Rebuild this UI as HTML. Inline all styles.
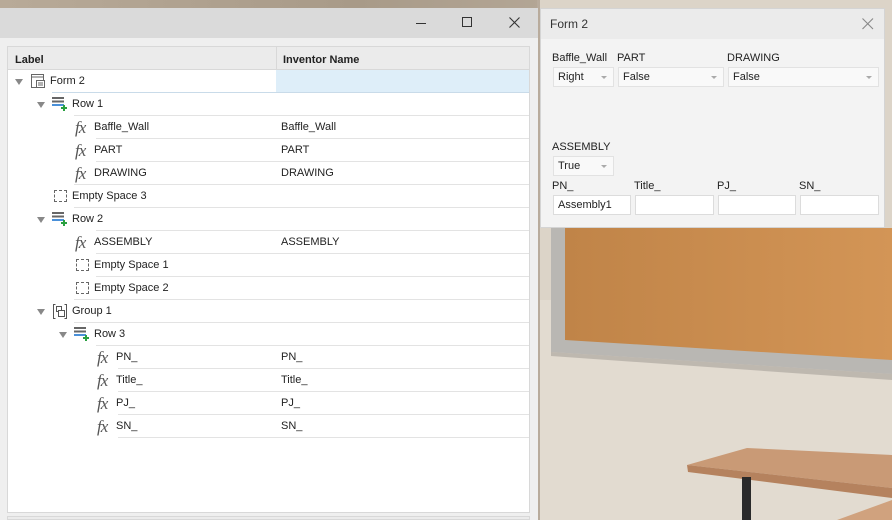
<!DOCTYPE html>
<html><head><meta charset="utf-8"><style>
*{box-sizing:border-box;margin:0;padding:0}
body{width:892px;height:520px;overflow:hidden;position:relative;font-family:"Liberation Sans",sans-serif;font-size:11px;color:#222;background:#d9d1c5}
.abs{position:absolute}
.row{position:absolute;left:0;height:23px;width:521px}
.row .line{position:absolute;bottom:0;right:0;height:1px;background:#e3e3e3}
.row .t{position:absolute;top:5px;white-space:nowrap}
.fx{position:absolute;top:2px;font-family:"Liberation Serif",serif;font-style:italic;font-size:17px;color:#555;letter-spacing:-1px}
.tri{position:absolute;top:9px;width:0;height:0;border-left:4px solid transparent;border-right:4px solid transparent;border-top:6px solid #888}
.es{position:absolute;top:5px;width:13px;height:12px;border:1px dashed #666}
.lbl{position:absolute;font-size:11px;color:#222}
.cb{position:absolute;height:20px;background:#f9f9f9;border:1px solid #e2e2e2;padding:3px 0 0 4px;font-size:11px}
.cb .ar{position:absolute;right:6px;top:8px;border-left:3px solid transparent;border-right:3px solid transparent;border-top:3px solid #aaa}
.tb{position:absolute;height:20px;background:#fff;border:1px solid #dcdcdc;padding:3px 0 0 4px;font-size:11px}
</style></head><body>
<div class="abs" style="left:0;top:0;width:892px;height:8px;background:linear-gradient(90deg,#b8aa98,#a89a88 40%,#c8bcae)"></div>
<svg class="abs" style="left:537px;top:0" width="355" height="520">
<defs><linearGradient id="g" x1="0" x2="1"><stop offset="0" stop-color="#c08448"/><stop offset="1" stop-color="#d39556"/></linearGradient></defs>
<rect x="0" y="0" width="355" height="520" fill="#dcd4c8"/>
<rect x="0" y="300" width="355" height="220" fill="#e2dbd0"/>
<polygon points="14,228 355,228 355,374 14,352" fill="#b9b7b3"/>
<polygon points="14,352 355,374 355,380 14,356" fill="#a6a09a" opacity=".6"/>
<polygon points="28,228 355,228 355,360 28,340" fill="url(#g)"/>
<polygon points="150,465 210,448 355,455 355,488" fill="#c99a76"/>
<polygon points="150,465 355,488 355,498 151,472" fill="#b5825e"/>
<rect x="205" y="477" width="9" height="43" fill="#2a2a2a"/>
<polygon points="300,520 355,500 355,520" fill="#d0a27e"/>
<rect x="0" y="0" width="3" height="520" fill="#b8ab9c"/>
</svg>
<div class="abs" style="left:0;top:8px;width:538px;height:512px;background:#efefef"></div>
<div class="abs" style="left:0;top:8px;width:538px;height:30px;background:#dadada"></div>
<div class="abs" style="left:416px;top:23px;width:10px;height:1px;background:#333"></div>
<div class="abs" style="left:462px;top:17px;width:10px;height:10px;border:1px solid #333"></div>
<svg class="abs" style="left:509px;top:17px" width="11" height="11"><path d="M0.5 0.5L10.5 10.5M10.5 0.5L0.5 10.5" stroke="#333" stroke-width="1.1"/></svg>
<div class="abs" style="left:7px;top:46px;width:523px;height:467px;background:#fff;border:1px solid #d8d8d8">
 <div class="abs" style="left:0;top:0;width:521px;height:23px;background:#ebebeb;border-bottom:1px solid #d8d8d8"></div>
 <div class="abs" style="left:268px;top:0;width:1px;height:23px;background:#d8d8d8"></div>
 <div class="abs" style="left:7px;top:7px;font-weight:bold">Label</div>
 <div class="abs" style="left:275px;top:7px;font-weight:bold">Inventor Name</div>
 <div class="abs" style="left:0;top:23px;width:521px;height:440px">
  <div class="row" style="top:0"><div class="abs" style="left:268px;top:0;width:253px;height:22px;background:#deeef9"></div><div class="line" style="left:44px;background:#c9dbe9"></div><div class="tri" style="left:7px"></div>
   <svg class="abs" style="left:22px;top:3px" width="16" height="16"><rect x="1.5" y="1.5" width="12" height="13" fill="none" stroke="#666"/><line x1="1.5" y1="4" x2="13.5" y2="4" stroke="#666"/><rect x="6.5" y="7.5" width="8" height="7" fill="#fff" stroke="#666"/><line x1="8" y1="10" x2="13" y2="10" stroke="#666"/><line x1="8" y1="12" x2="13" y2="12" stroke="#666"/></svg>
   <div class="t" style="left:42px">Form 2</div></div>
  <div class="row" style="top:23px"><div class="line" style="left:66px"></div><div class="tri" style="left:29px"></div>
   <svg class="abs" style="left:44px;top:3px" width="16" height="16"><rect x="0" y="1" width="12" height="2" fill="#666"/><rect x="0" y="4.5" width="12" height="2" fill="#666"/><rect x="0" y="8" width="12" height="2" fill="#4a90d9"/><path d="M12 9v6M9 12h6" stroke="#2aa040" stroke-width="2"/></svg>
   <div class="t" style="left:64px">Row 1</div></div>
  <div class="row" style="top:46px"><div class="line" style="left:88px"></div><div class="fx" style="left:67px">fx</div><div class="t" style="left:86px">Baffle_Wall</div><div class="t" style="left:273px">Baffle_Wall</div></div>
  <div class="row" style="top:69px"><div class="line" style="left:88px"></div><div class="fx" style="left:67px">fx</div><div class="t" style="left:86px">PART</div><div class="t" style="left:273px">PART</div></div>
  <div class="row" style="top:92px"><div class="line" style="left:66px"></div><div class="fx" style="left:67px">fx</div><div class="t" style="left:86px">DRAWING</div><div class="t" style="left:273px">DRAWING</div></div>
  <div class="row" style="top:115px"><div class="line" style="left:66px"></div><div class="es" style="left:46px"></div><div class="t" style="left:64px">Empty Space 3</div></div>
  <div class="row" style="top:138px"><div class="line" style="left:88px"></div><div class="tri" style="left:29px"></div>
   <svg class="abs" style="left:44px;top:3px" width="16" height="16"><rect x="0" y="1" width="12" height="2" fill="#666"/><rect x="0" y="4.5" width="12" height="2" fill="#666"/><rect x="0" y="8" width="12" height="2" fill="#4a90d9"/><path d="M12 9v6M9 12h6" stroke="#2aa040" stroke-width="2"/></svg>
   <div class="t" style="left:64px">Row 2</div></div>
  <div class="row" style="top:161px"><div class="line" style="left:88px"></div><div class="fx" style="left:67px">fx</div><div class="t" style="left:86px">ASSEMBLY</div><div class="t" style="left:273px">ASSEMBLY</div></div>
  <div class="row" style="top:184px"><div class="line" style="left:88px"></div><div class="es" style="left:68px"></div><div class="t" style="left:86px">Empty Space 1</div></div>
  <div class="row" style="top:207px"><div class="line" style="left:66px"></div><div class="es" style="left:68px"></div><div class="t" style="left:86px">Empty Space 2</div></div>
  <div class="row" style="top:230px"><div class="line" style="left:66px"></div><div class="tri" style="left:29px"></div>
   <svg class="abs" style="left:44px;top:3px" width="16" height="17"><path d="M3.5 1.5H1.5V15.5H3.5M12.5 1.5H14.5V15.5H12.5" fill="none" stroke="#555"/><rect x="4.5" y="3.5" width="5" height="5" fill="none" stroke="#555"/><rect x="6.5" y="7.5" width="6" height="6" fill="#fff" stroke="#555"/></svg>
   <div class="t" style="left:64px">Group 1</div></div>
  <div class="row" style="top:253px"><div class="line" style="left:88px"></div><div class="tri" style="left:51px"></div>
   <svg class="abs" style="left:66px;top:3px" width="16" height="16"><rect x="0" y="1" width="12" height="2" fill="#666"/><rect x="0" y="4.5" width="12" height="2" fill="#666"/><rect x="0" y="8" width="12" height="2" fill="#4a90d9"/><path d="M12 9v6M9 12h6" stroke="#2aa040" stroke-width="2"/></svg>
   <div class="t" style="left:86px">Row 3</div></div>
  <div class="row" style="top:276px"><div class="line" style="left:110px"></div><div class="fx" style="left:89px">fx</div><div class="t" style="left:108px">PN_</div><div class="t" style="left:273px">PN_</div></div>
  <div class="row" style="top:299px"><div class="line" style="left:110px"></div><div class="fx" style="left:89px">fx</div><div class="t" style="left:108px">Title_</div><div class="t" style="left:273px">Title_</div></div>
  <div class="row" style="top:322px"><div class="line" style="left:110px"></div><div class="fx" style="left:89px">fx</div><div class="t" style="left:108px">PJ_</div><div class="t" style="left:273px">PJ_</div></div>
  <div class="row" style="top:345px"><div class="line" style="left:110px"></div><div class="fx" style="left:89px">fx</div><div class="t" style="left:108px">SN_</div><div class="t" style="left:273px">SN_</div></div>
 </div>
</div>
<div class="abs" style="left:7px;top:516px;width:523px;height:4px;background:#ebebeb;border:1px solid #d8d8d8"></div>
<div class="abs" style="left:540px;top:8px;width:345px;height:220px;background:#f3f3f3;border:1px solid #d4d4d4">
 <div class="abs" style="left:0;top:0;width:343px;height:30px;background:#ebebeb"></div>
 <div class="abs" style="left:9px;top:8px;font-size:12px;color:#333">Form 2</div>
 <svg class="abs" style="left:321px;top:9px" width="12" height="12"><path d="M0.5 0.5L11 11M11 0.5L0.5 11" stroke="#888" stroke-width="1.1"/></svg>
 <div class="lbl" style="left:11px;top:43px">Baffle_Wall</div>
 <div class="lbl" style="left:76px;top:43px">PART</div>
 <div class="lbl" style="left:186px;top:43px">DRAWING</div>
 <div class="cb" style="left:12px;top:58px;width:61px">Right<div class="ar"></div></div>
 <div class="cb" style="left:77px;top:58px;width:106px">False<div class="ar"></div></div>
 <div class="cb" style="left:187px;top:58px;width:151px">False<div class="ar"></div></div>
 <div class="lbl" style="left:11px;top:132px">ASSEMBLY</div>
 <div class="cb" style="left:12px;top:147px;width:61px">True<div class="ar"></div></div>
 <div class="lbl" style="left:11px;top:171px">PN_</div>
 <div class="lbl" style="left:93px;top:171px">Title_</div>
 <div class="lbl" style="left:176px;top:171px">PJ_</div>
 <div class="lbl" style="left:258px;top:171px">SN_</div>
 <div class="tb" style="left:12px;top:186px;width:78px">Assembly1</div>
 <div class="tb" style="left:94px;top:186px;width:79px"></div>
 <div class="tb" style="left:177px;top:186px;width:78px"></div>
 <div class="tb" style="left:259px;top:186px;width:79px"></div>
</div>
</body></html>
